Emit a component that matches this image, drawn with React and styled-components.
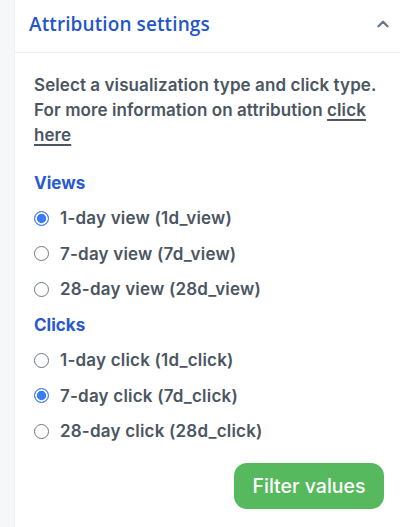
import React, { useState } from "react";
import styled, { createGlobalStyle } from "styled-components";

const Global = createGlobalStyle`
  html, body { margin: 0; padding: 0; background: #ffffff; }
  body { font-family: Inter, "Noto Sans", sans-serif; }
  * { box-sizing: border-box; }
`;

const Page = styled.div`
  display: flex;
  width: 400px;
  height: 527px;
  overflow: hidden;
`;

const SideStrip = styled.div`
  width: 15px;
  flex: none;
  background: #f6f7f9;
  border-right: 1px solid #eef0f2;
`;

const Panel = styled.section`
  flex: 1;
  display: flex;
  flex-direction: column;
  background: #ffffff;
`;

const Header = styled.header`
  height: 53px;
  display: flex;
  align-items: center;
  justify-content: space-between;
  padding: 0 8px 5px 14px;
  border-bottom: 1px solid #eceef1;
`;

const Title = styled.h2`
  margin: 0;
  font-family: "Open Sans", sans-serif;
  font-weight: 600;
  font-size: 19px;
  color: #2456c9;
  letter-spacing: 0.1px;
`;

const Toggle = styled.button`
  border: 0;
  background: none;
  padding: 0;
  display: flex;
  color: #6c7885;
`;

const Body = styled.div`
  padding: 20px 16px 0 19px;
  display: flex;
  flex-direction: column;
`;

const Intro = styled.p`
  margin: 0 0 17px;
  font-size: 17px;
  font-weight: 600;
  line-height: 25px;
  letter-spacing: 0.08px;
  color: #4b5662;
`;

const Link = styled.a`
  color: inherit;
  text-decoration: underline;
  text-decoration-thickness: 1.5px;
  text-underline-offset: 3px;
`;

const Group = styled.div`
  display: flex;
  flex-direction: column;
`;

const GroupTitle = styled.h3`
  margin: 0;
  height: 35.5px;
  display: flex;
  align-items: center;
  font-size: 17px;
  font-weight: 700;
  color: #2a5ad0;
`;

const Row = styled.label`
  height: 35.5px;
  display: flex;
  align-items: center;
  gap: 11px;
  font-size: 17px;
  font-weight: 600;
  letter-spacing: 0.2px;
  color: #4b5662;
  cursor: pointer;
`;

const Radio = styled.span`
  width: 15px;
  height: 15px;
  flex: none;
  border-radius: 50%;
  border: ${(p) => (p.$on ? "1.5px solid #3b7bf6" : "1.4px solid #6f7780")};
  background: ${(p) => (p.$on ? "#3b7bf6" : "#ffffff")};
  box-shadow: ${(p) => (p.$on ? "inset 0 0 0 1.8px #ffffff" : "none")};
`;

const Footer = styled.div`
  display: flex;
  justify-content: flex-end;
  padding: 14px 0 0;
`;

const FilterButton = styled.button`
  width: 150px;
  height: 46px;
  border: 0;
  border-radius: 13px;
  background: #56b95d;
  color: #ffffff;
  font-family: Inter, sans-serif;
  font-size: 19.5px;
  font-weight: 500;
  cursor: pointer;
`;

const views = [
  ["1d_view", "1-day view (1d_view)"],
  ["7d_view", "7-day view (7d_view)"],
  ["28d_view", "28-day view (28d_view)"],
];
const clicks = [
  ["1d_click", "1-day click (1d_click)"],
  ["7d_click", "7-day click (7d_click)"],
  ["28d_click", "28-day click (28d_click)"],
];

function RadioGroup({ title, options, value, onChange }) {
  return (
    <Group>
      <GroupTitle>{title}</GroupTitle>
      {options.map(([key, label]) => (
        <Row key={key} onClick={() => onChange(key)}>
          <Radio $on={value === key} />
          {label}
        </Row>
      ))}
    </Group>
  );
}

export default function App() {
  const [view, setView] = useState("1d_view");
  const [click, setClick] = useState("7d_click");
  return (
    <Page>
      <Global />
      <SideStrip />
      <Panel>
        <Header>
          <Title>Attribution settings</Title>
          <Toggle aria-label="Collapse">
            <svg width="18" height="18" viewBox="0 0 24 24" fill="none" stroke="currentColor" strokeWidth="3.2" strokeLinecap="round" strokeLinejoin="round">
              <path d="M6 15l6-6 6 6" />
            </svg>
          </Toggle>
        </Header>
        <Body>
          <Intro>
            Select a visualization type and click type. For more information on attribution{" "}
            <Link href="#">click here</Link>
          </Intro>
          <RadioGroup title="Views" options={views} value={view} onChange={setView} />
          <RadioGroup title="Clicks" options={clicks} value={click} onChange={setClick} />
          <Footer>
            <FilterButton>Filter values</FilterButton>
          </Footer>
        </Body>
      </Panel>
    </Page>
  );
}
